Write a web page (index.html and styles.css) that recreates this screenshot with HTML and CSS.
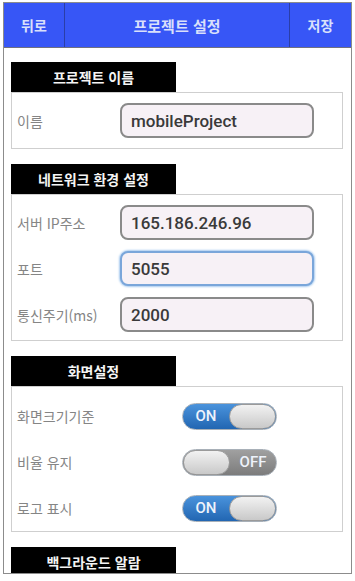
FILE: index.html
```html
<!DOCTYPE html>
<html lang="ko">
<head>
<meta charset="utf-8">
<link rel="stylesheet" href="styles.css">
</head>
<body>
<div class="frame">
  <div class="topbar">
    <div class="tb-btn tb-back">뒤로</div>
    <div class="tb-title">프로젝트 설정</div>
    <div class="tb-btn tb-save">저장</div>
  </div>
  <div class="content">
    <div class="section">
      <div class="sec-head">프로젝트 이름</div>
      <div class="sec-box form single">
        <div class="label">이름</div>
        <div class="input">mobileProject</div>
      </div>
    </div>
    <div class="section">
      <div class="sec-head">네트워크 환경 설정</div>
      <div class="sec-box form">
        <div class="label">서버 IP주소</div>
        <div class="input">165.186.246.96</div>
        <div class="label">포트</div>
        <div class="input focus">5055</div>
        <div class="label">통신주기(ms)</div>
        <div class="input">2000</div>
      </div>
    </div>
    <div class="section">
      <div class="sec-head">화면설정</div>
      <div class="sec-box toggles">
        <div class="trow">
          <div class="label">화면크기기준</div>
          <div class="toggle on"><span class="ttext">ON</span><span class="knob"></span></div>
        </div>
        <div class="trow">
          <div class="label">비율 유지</div>
          <div class="toggle off"><span class="knob"></span><span class="ttext">OFF</span></div>
        </div>
        <div class="trow">
          <div class="label">로고 표시</div>
          <div class="toggle on"><span class="ttext">ON</span><span class="knob"></span></div>
        </div>
      </div>
    </div>
    <div class="section">
      <div class="sec-head">백그라운드 알람</div>
    </div>
  </div>
</div>
</body>
</html>
```
FILE: styles.css
```css
html, body {
  margin: 0;
  padding: 0;
  background: #ffffff;
}
body {
  font-family: Roboto, "Noto Sans CJK KR", sans-serif;
}
.frame {
  margin: 2px 0 0 3px;
  width: 349px;
  height: 572px;
  box-sizing: border-box;
  border: 1px solid #8c8c8c;
  overflow: hidden;
  display: flex;
  flex-direction: column;
  background: #ffffff;
}
.topbar {
  flex: none;
  height: 44px;
  background: #3756f6;
  border-bottom: 1px solid #707080;
  display: flex;
  align-items: stretch;
  color: #d9e0fb;
  font-family: "Noto Sans CJK KR", sans-serif;
  font-weight: 700;
  font-size: 14px;
}
.tb-btn, .tb-title {
  display: flex;
  align-items: center;
  justify-content: center;
}
.tb-back {
  width: 60px;
  border-right: 1px solid #2a3ea8;
}
.tb-title {
  flex: 1;
  font-size: 15px;
}
.tb-save {
  width: 61px;
  border-left: 1px solid #2a3ea8;
}
.content {
  padding: 14px 8px 0 7px;
  display: flex;
  flex-direction: column;
  gap: 15px;
}
.section {
  display: flex;
  flex-direction: column;
}
.sec-head {
  width: 165px;
  height: 30px;
  background: #000000;
  color: #f4f4f4;
  font-family: "Noto Sans CJK KR", sans-serif;
  font-weight: 700;
  font-size: 14px;
  display: flex;
  align-items: center;
  justify-content: center;
}
.sec-box {
  border: 1px solid #cfcfcf;
  box-sizing: border-box;
}
.form {
  display: grid;
  grid-template-columns: 103px 194px;
  row-gap: 11px;
  align-items: center;
  padding: 10px 0 8px 5px;
}
.form.single {
  padding-bottom: 10px;
}
.label {
  color: #858585;
  font-size: 14px;
  font-family: "Noto Sans CJK KR", Roboto, sans-serif;
}
.input {
  height: 35px;
  box-sizing: border-box;
  border: 2px solid #8a8a8a;
  border-radius: 8px;
  background: #f7f1f6;
  color: #3a3a3a;
  font-size: 17px;
  font-weight: 500;
  padding-left: 9px;
  display: flex;
  align-items: center;
}
.input.focus {
  border-color: #7aa6da;
  box-shadow: 0 0 2px 1px #a9cbef;
}
.toggles {
  padding: 6px 0 0 5px;
  display: flex;
  flex-direction: column;
}
.trow {
  height: 46px;
  display: grid;
  grid-template-columns: 165px 95px;
  align-items: center;
}
.toggle {
  width: 95px;
  height: 27px;
  box-sizing: border-box;
  border-radius: 14px;
  border: 1px solid #a8b0b8;
  display: flex;
  align-items: center;
  overflow: hidden;
}
.toggle.on {
  background: linear-gradient(#4a93dc, #2266b2);
}
.toggle.off {
  background: linear-gradient(#a0a0a0, #7c7c7c);
}
.ttext {
  flex: 1;
  text-align: center;
  color: #eef3fb;
  font-size: 15px;
  font-weight: 500;
  font-family: Roboto, sans-serif;
}
.knob {
  width: 47px;
  height: 25px;
  box-sizing: border-box;
  border-radius: 13px;
  border: 1px solid #9a9a9a;
  background: linear-gradient(#f2f2f2, #c9c9c9);
}
```
